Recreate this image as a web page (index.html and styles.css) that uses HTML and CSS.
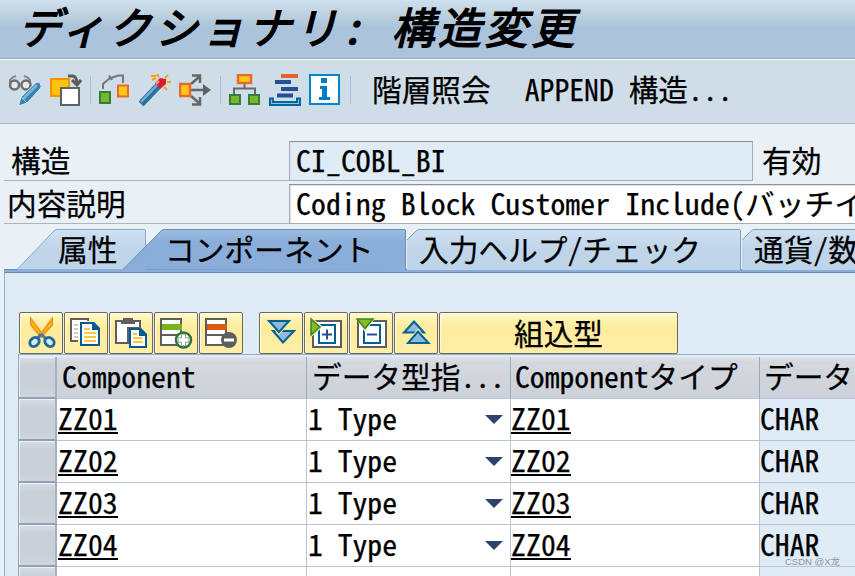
FILE: index.html
```html
<!DOCTYPE html>
<html lang="ja">
<head>
  <meta charset="UTF-8">
  <title>ディクショナリ: 構造変更</title>
  <link rel="stylesheet" href="styles.css">
</head>
<body>

  <header class="titlebar">
    <h1>ディクショナリ: 構造変更</h1>
  </header>

  <nav class="toolbar">
    <!-- display / change -->
    <svg class="icon" viewBox="0 0 32 32">
      <path d="M1 9V6L4 3L7 2M21 9V6L18 3L15 2" fill="none" stroke="#888" stroke-width="2"/>
      <circle cx="5.500" cy="11" r="4.500" fill="#e4ebf0" stroke="#6d6d6d" stroke-width="2.500"/>
      <circle cx="17" cy="11" r="4.500" fill="#e4ebf0" stroke="#6d6d6d" stroke-width="2.500"/>
      <path d="M9.500 32L12 23L27 8.500Q30 7 31.500 10Q33 13 31 15L18 29Z" fill="#3583b5" stroke="#e3edf4" stroke-width="1"/>
      <path d="M14 25L28 11" stroke="#78b5dc" stroke-width="2.500"/>
      <path d="M12 23L18 29" stroke="#b8d5e8" stroke-width="1"/>
    </svg>
    <!-- other object -->
    <svg class="icon icon-copyobj" viewBox="0 0 32 32">
      <rect x="1" y="5" width="18" height="17" fill="#ffc20f" stroke="#f29400" stroke-width="2"/>
      <path d="M18 2H23Q27 3 27 10M22 6L27 11L31 6" fill="none" stroke="#5c5c5c" stroke-width="3"/>
      <rect x="11" y="14" width="18" height="17" fill="#fff" stroke="#616161" stroke-width="2"/>
    </svg>
    <span class="sep"></span>
    <svg class="icon" viewBox="0 0 32 32">
      <path d="M5 15V10L12 4M11 1.500L14 6M13 4L20 1.500H25V9" fill="none" stroke="#777" stroke-width="2"/>
      <rect x="2" y="18" width="10" height="11" fill="#76b82a" stroke="#367c3e" stroke-width="2"/>
      <rect x="20" y="11.500" width="10" height="11" fill="#ffc61a" stroke="#e56b2c" stroke-width="2"/>
    </svg>
    <!-- activate -->
    <svg class="icon icon-wand" viewBox="0 0 32 32">
      <path d="M2 30L20 11" stroke="#28749f" stroke-width="7"/>
      <path d="M2 28L19 10" stroke="#75add2" stroke-width="2.500"/>
      <path d="M16 9L21 4L27 5V10L21 15Z" fill="#dc1c28"/>
      <path d="M17 10L20 7" stroke="#f4a1a4" stroke-width="2"/>
      <path d="M12 2H17M18 0L20 3M29 1L26 4M28 8H32M25 13L28 16M13 6L17 4" stroke="#ffa200" stroke-width="2"/>
    </svg>
    <!-- where-used -->
    <svg class="icon icon-used" viewBox="0 0 32 32">
      <path d="M12 16H26M12 10L20 3M12 22L20 29M13 1.500H21V9M13 30.500H21V23" fill="none" stroke="#666" stroke-width="2.500"/>
      <path d="M24 10L32 16L24 22Z" fill="#606060"/>
      <rect x="1" y="10" width="10" height="12" fill="#ffc61a" stroke="#e56b2c" stroke-width="2.500"/>
    </svg>
    <span class="sep sep-wide"></span>
    <!-- hierarchy -->
    <svg class="icon icon-tree" viewBox="0 0 32 32">
      <path d="M15.500 10V15M5 20V14.500H26V20" fill="none" stroke="#686868" stroke-width="2"/>
      <rect x="9" y="1" width="13" height="8" fill="#ffc61a" stroke="#e56b2c" stroke-width="2.500"/>
      <rect x="1" y="21" width="10" height="9" fill="#76b82a" stroke="#367c3e" stroke-width="2"/>
      <rect x="20" y="21" width="10" height="9" fill="#76b82a" stroke="#367c3e" stroke-width="2"/>
    </svg>
    <svg class="icon icon-stack" viewBox="0 0 32 32">
      <rect x="12" y="0" width="17" height="4" fill="#e0642b"/>
      <rect x="6" y="6" width="16" height="4" fill="#254f96"/>
      <rect x="12" y="13" width="17" height="4" fill="#254f96"/>
      <rect x="8" y="19.500" width="16" height="4" fill="#254f96"/>
      <path d="M1 24.500H4V28H28V24.500H31V31H1Z" fill="#8ec0df" stroke="#00659b" stroke-width="2"/>
    </svg>
    <svg class="icon icon-info" viewBox="0 0 32 32">
      <rect x="1" y="1" width="29" height="29" fill="#fff" stroke="#0085c8" stroke-width="2"/>
      <path d="M12 4H18V9H12ZM11 12H18V23H21V26H10V23H13V15H11Z" fill="#007cc0"/>
    </svg>
    <span class="sep sep-wide"></span>
    <span class="command">階層照会</span>
    <span class="command">APPEND 構造...</span>
  </nav>

  <main>
    <section class="fields">
      <div class="field-row">
        <label class="indent">構造</label>
        <div class="field readonly">CI_COBL_BI</div>
        <span class="status">有効</span>
      </div>
      <div class="field-row">
        <label>内容説明</label>
        <div class="field">Coding Block Customer Include(バッチイ</div>
      </div>
    </section>

    <svg class="defs" width="0" height="0">
      <defs>
        <linearGradient id="tabFill" x1="0" y1="0" x2="0" y2="1">
          <stop offset="0" stop-color="#cfe0f0"/>
          <stop offset=".5" stop-color="#bfd5ea"/>
          <stop offset="1" stop-color="#bdd4e9"/>
        </linearGradient>
        <linearGradient id="activeFill" x1="0" y1="0" x2="0" y2="1">
          <stop offset="0" stop-color="#9dbde1"/>
          <stop offset=".3" stop-color="#8aaed9"/>
          <stop offset="1" stop-color="#8aaed9"/>
        </linearGradient>
      </defs>
    </svg>

    <div class="tabs">
      <div class="tab tab-attr">
        <svg class="tab-shape" viewBox="0 0 130 41"><path d="M0 40.500L36 3Q38 .5 40 .5H127Q128.500 .5 128.500 2V40.500" fill="url(#tabFill)" stroke="#8ba9c6"/></svg>
        <span>属性</span>
      </div>
      <div class="tab tab-comp">
        <svg class="tab-shape" viewBox="0 0 284 41"><path d="M0 40.500L37 3Q39 .5 41 .5H281Q282.500 .5 282.500 2V41" fill="url(#activeFill)" stroke="#668db7"/></svg>
        <span>コンポーネント</span>
      </div>
      <div class="tab tab-help">
        <svg class="tab-shape" viewBox="0 0 335 41"><path d="M-.5 41V11.500L9 2Q10.500 .5 12 .5H332Q333.500 .5 333.500 2V41" fill="url(#tabFill)" stroke="#7e9fc0"/></svg>
        <span>入力ヘルプ/チェック</span>
      </div>
      <div class="tab tab-qty">
        <svg class="tab-shape" viewBox="0 0 260 41"><path d="M-.5 41V11.500L9 2Q10.500 .5 12 .5H260V41" fill="url(#tabFill)" stroke="#7e9fc0"/></svg>
        <span>通貨/数</span>
      </div>
    </div>

    <section class="panel">
      <div class="buttons">
        <button class="btn">
          <svg viewBox="0 0 44 42">
            <path d="M12 7V13L22 25L33 13V7L22.500 21Z" fill="#ffc400" stroke="#f39a1d" stroke-width="2"/>
            <path d="M22 22L19 26M22 22L26 26" stroke="#45789c" stroke-width="3"/>
            <ellipse cx="15.500" cy="30" rx="5" ry="4" transform="rotate(-40 15.500 30)" fill="#d7eaf5" stroke="#226a9b" stroke-width="3"/>
            <ellipse cx="30.500" cy="30" rx="5" ry="4" transform="rotate(40 30.500 30)" fill="#d7eaf5" stroke="#226a9b" stroke-width="3"/>
          </svg>
        </button>
        <button class="btn">
          <svg viewBox="0 0 44 42">
            <path d="M24 9V7H7V29H14" fill="#fff" stroke="#5e5e5e" stroke-width="2"/>
            <path d="M10 13H14M10 17H14M10 21H14M10 25H14" stroke="#bbb" stroke-width="1.500"/>
            <path d="M17 11H29L35 17V33H17Z" fill="#fff" stroke="#005b94" stroke-width="2"/>
            <path d="M28 10H30L36 16V18H28Z" fill="#005b94"/>
            <path d="M20 17H26M20 21H32M20 25H32M20 29H32" stroke="#ffc83d" stroke-width="2"/>
          </svg>
        </button>
        <button class="btn">
          <svg viewBox="0 0 44 42">
            <path d="M31 16V9H7V31H19V16Z" fill="#fff" stroke="#5e5e5e" stroke-width="2"/>
            <path d="M14 6H24V8H26V12H12V8H14Z" fill="#5e5e5e"/>
            <path d="M21 17H31L37 23V35H21Z" fill="#fff" stroke="#005b94" stroke-width="2"/>
            <path d="M30 16H32L38 22V24H30Z" fill="#005b94"/>
            <path d="M24 22H28M24 26H33M24 30H34" stroke="#ffc83d" stroke-width="2"/>
          </svg>
        </button>
        <button class="btn">
          <svg viewBox="0 0 44 42">
            <path d="M27 7H7V33H27Z" fill="#fff" stroke="#5e5e5e" stroke-width="2"/>
            <path d="M7 23H27" stroke="#5e5e5e" stroke-width="2"/>
            <rect x="8" y="12" width="20" height="6" fill="#76b51b"/>
            <circle cx="29.500" cy="28" r="7.500" fill="#fff" stroke="#33713d" stroke-width="2.500"/>
            <path d="M29.500 22.500V33.500M24 28H35" stroke="#67936e" stroke-width="5"/>
            <path d="M29.500 23V33M24.500 28H34.500" stroke="#fff" stroke-width="3.500"/>
          </svg>
        </button>
        <button class="btn">
          <svg viewBox="0 0 44 42">
            <path d="M27 7H7V33H27Z" fill="#fff" stroke="#5e5e5e" stroke-width="2"/>
            <path d="M7 23H27" stroke="#5e5e5e" stroke-width="2"/>
            <rect x="8" y="12" width="20" height="6" fill="#dc5816"/>
            <circle cx="30" cy="28" r="8" fill="#5e5e5e"/>
            <path d="M25 28H35" stroke="#fff" stroke-width="3"/>
          </svg>
        </button>
        <button class="btn gap">
          <svg viewBox="0 0 44 42">
            <path d="M14 19H35L24 30.500Z" fill="#91b8df" stroke="#00628f" stroke-width="2"/>
            <path d="M10 9H30L20 20Z" fill="#91b8df" stroke="#ffeea8" stroke-width="4"/>
            <path d="M10 9H30L20 20Z" fill="#91b8df" stroke="#00628f" stroke-width="2"/>
          </svg>
        </button>
        <button class="btn">
          <svg viewBox="0 0 44 42">
            <rect x="9" y="9" width="28" height="26" fill="#fff" stroke="#5e5e5e" stroke-width="2"/>
            <rect x="15" y="13" width="16" height="18" fill="#fff" stroke="#005f91" stroke-width="2"/>
            <path d="M23 17.500V27.500M18 22.500H28" stroke="#214f98" stroke-width="2"/>
            <path d="M6 4V26L19 15Z" fill="#fff6c8"/>
            <path d="M7 7V23L16 15Z" fill="#82bc27" stroke="#41801f" stroke-width="1.500"/>
          </svg>
        </button>
        <button class="btn">
          <svg viewBox="0 0 44 42">
            <rect x="9" y="9" width="28" height="26" fill="#fff" stroke="#5e5e5e" stroke-width="2"/>
            <rect x="15" y="13" width="16" height="18" fill="#fff" stroke="#005f91" stroke-width="2"/>
            <path d="M18 22.500H28" stroke="#214f98" stroke-width="2"/>
            <path d="M6 5H27L16 20Z" fill="#fff6c8"/>
            <path d="M8 7H24L16 16.500Z" fill="#82bc27" stroke="#41801f" stroke-width="1.500"/>
          </svg>
        </button>
        <button class="btn">
          <svg viewBox="0 0 44 42">
            <path d="M10 20.500H30L20 9.500Z" fill="#91b8df" stroke="#00628f" stroke-width="2"/>
            <path d="M14 31H34.500L24 19.500Z" fill="#91b8df" stroke="#ffeea8" stroke-width="4"/>
            <path d="M14 31H34.500L24 19.500Z" fill="#91b8df" stroke="#00628f" stroke-width="2"/>
          </svg>
        </button>
        <button class="btn btn-text">組込型</button>
      </div>

      <div class="grid">
        <div class="row head">
          <div class="mark"></div>
          <div class="cell">Component</div>
          <div class="cell">データ型指...</div>
          <div class="cell">Componentタイプ</div>
          <div class="cell">データ</div>
        </div>
        <div class="row">
          <div class="mark"></div>
          <div class="cell"><a>ZZ01</a></div>
          <div class="cell select">1 Type</div>
          <div class="cell"><a>ZZ01</a></div>
          <div class="cell dtype">CHAR</div>
        </div>
        <div class="row">
          <div class="mark"></div>
          <div class="cell"><a>ZZ02</a></div>
          <div class="cell select">1 Type</div>
          <div class="cell"><a>ZZ02</a></div>
          <div class="cell dtype">CHAR</div>
        </div>
        <div class="row">
          <div class="mark"></div>
          <div class="cell"><a>ZZ03</a></div>
          <div class="cell select">1 Type</div>
          <div class="cell"><a>ZZ03</a></div>
          <div class="cell dtype">CHAR</div>
        </div>
        <div class="row">
          <div class="mark"></div>
          <div class="cell"><a>ZZ04</a></div>
          <div class="cell select">1 Type</div>
          <div class="cell"><a>ZZ04</a></div>
          <div class="cell dtype">CHAR</div>
        </div>
        <div class="row last">
          <div class="mark"></div>
          <div class="cell"></div>
          <div class="cell"></div>
          <div class="cell"></div>
          <div class="cell dtype"></div>
        </div>
      </div>
    </section>
  </main>

  <div class="watermark">CSDN @X龙</div>

</body>
</html>
```

FILE: styles.css
```css
* {
  box-sizing: border-box;
}
body {
  margin: 0;
  height: 576px;
  overflow: hidden;
  position: relative;
  background: #e9f0f6;
  color: #000;
  font-family: "Noto Sans CJK JP", sans-serif;
  font-size: 29.7px;
  line-height: 38px;
  font-feature-settings: "hwid";
  -webkit-text-stroke: .25px #000;
  white-space: nowrap;
}

/* title */
.titlebar {
  height: 60px;
  padding-left: 18px;
  background: linear-gradient(#cfe0ef 0, #bfd2e0 14px, #abc4db 27px, #acc3db 57px);
  border-bottom: 1px solid #f5f8fb;
  box-shadow: inset 0 -1px #94aec8;
}
h1 {
  margin: 0;
  font-size: 43px;
  letter-spacing: 3.6px;
  line-height: 51px;
  font-style: italic;
  font-weight: normal;
  -webkit-text-stroke: 1.5px #000;
}

/* application toolbar */
.toolbar {
  display: flex;
  align-items: center;
  height: 64px;
  padding: 0 0 3px 9px;
  background: #cfdde8;
  border-bottom: 1px solid #a6b7c6;
}
.icon {
  width: 32px;
  height: 32px;
  flex: none;
}
.icon-copyobj,
.icon-wand {
  margin-left: 9px;
}
.icon-used,
.icon-stack,
.icon-info {
  margin-left: 8px;
}
.sep {
  width: 1px;
  height: 28px;
  margin: 0 7px 0 8px;
  background: #a4c0dc;
}
.sep-wide {
  margin: 0 8px 0 9px;
}
.command {
  margin: -2px 0 0 13px;
}
.command + .command {
  margin-left: 34px;
}

/* header fields */
.fields {
  padding: 17px 0 0 4px;
}
.field-row {
  display: flex;
  height: 40px;
  margin-bottom: 3px;
}
label {
  width: 285px;
  flex: none;
  padding-left: 3px;
  border-bottom: 1px solid #b0b4b8;
}
.indent {
  padding-left: 7px;
}
.field {
  width: 566px;
  flex: none;
  overflow: hidden;
  padding-left: 6px;
  line-height: 36px;
  letter-spacing: .12px;
  background: #fff;
  border: 1px solid #a8adb2;
  border-top-color: #8c9299;
  border-right: 0;
  box-shadow: inset 1px 1px #dde0e4;
}
.readonly {
  width: 464px;
  background: #dfebf5;
  border-right: 1px solid #a8adb2;
}
.status {
  margin-left: 9px;
}

/* tab strip */
.defs {
  display: block;
}
.tabs {
  display: flex;
  height: 43px;
  margin: 2px 0 0 4px;
  padding-left: 13px;
  line-height: 39px;
  border-bottom: 2px solid #8aaed9;
  box-shadow: inset 0 -1px #668db7, 0 1px #668db7;
}
.tab {
  position: relative;
  flex: none;
  height: 41px;
}
.tab-shape {
  position: absolute;
  top: 0;
  left: 0;
  width: 100%;
  height: 41px;
}
.tab span {
  position: relative;
}
.tab-attr {
  width: 130px;
  padding-left: 41px;
}
.tab-comp {
  width: 284px;
  margin-left: -24px;
  padding-left: 42px;
  letter-spacing: .1px;
  z-index: 1;
}
.tab-help {
  width: 335px;
  padding-left: 12px;
}
.tab-qty {
  width: 113px;
  overflow: hidden;
  padding-left: 12px;
}
.tab-qty .tab-shape {
  width: 260px;
}

.panel {
  height: 304px;
  overflow: hidden;
  margin: 0 0 0 4px;
  padding: 40px 0 0 13px;
  background: #dfebf5;
  background-clip: padding-box;
  border-top: 1px solid transparent;
  border-left: 1px solid #8fb0d2;
}

/* table buttons */
.buttons {
  display: flex;
  gap: 1px;
  margin-top: -1px;
  padding-left: 1px;
}
.btn {
  width: 44px;
  height: 42px;
  padding: 0;
  border: 1px solid #6e6b57;
  border-radius: 2px;
  background: linear-gradient(#fffbe0 0, #fff2b0 6px, #ffeb9c 16px, #ffeea8 100%);
  box-shadow: inset 1px 0 #fffbe0;
  font: inherit;
  font-feature-settings: inherit;
  -webkit-text-stroke: inherit;
  color: #000;
}
.btn svg {
  display: block;
  width: 44px;
  height: 42px;
  margin: -1px;
}
.gap {
  margin-left: 15px;
}
.btn-text {
  width: 239px;
}

/* component table */
.grid {
  border-top: 1px solid #8fb0d2;
  border-left: 1px solid #8fa4bb;
}
.row {
  display: grid;
  grid-template-columns: 38px 250px 204px 249px 95px;
  height: 42px;
}
.mark {
  border-right: 2px solid #a3b1c0;
  border-bottom: 2px solid #8fa1b4;
  background: linear-gradient(#d9dee6, #cad0d8 8px, #cad0d8 32px, #d0d5df);
  box-shadow: inset 1px 1px #eef1f4;
}
.cell {
  padding-left: 1px;
  line-height: 37px;
  background: #fff;
  border-right: 1px solid #b9c4d4;
  border-bottom: 1px solid #b9c4d4;
}
.row .cell:nth-child(n+4) {
  padding-left: 0;
}
.cell:last-child {
  border-right: 0;
}
.row .dtype {
  background: #dfebf5;
}
.cell a {
  display: inline-block;
  height: 35px;
  letter-spacing: .1px;
  border-bottom: 2px solid #000;
}
.select {
  display: flex;
  justify-content: space-between;
  padding-right: 7px;
}
.select::after {
  content: "";
  align-self: center;
  border: 9px solid transparent;
  border-top: 9px solid #2c426f;
  border-bottom: 0;
}
.head {
  height: 44px;
  padding-top: 2px;
}
.head .cell {
  padding-left: 5px;
  line-height: 38px;
  background: linear-gradient(#e0e4e9 0, #d3d9df 5px, #d1d6dc 16px, #cdd2da 100%);
  border-right-color: #9ca9b7;
}
.row.head .cell:nth-child(n+4) {
  padding-left: 4px;
}
.last {
  height: 10px;
}
.last .mark,
.last .cell {
  border-bottom: 0;
}

.watermark {
  position: absolute;
  right: 15px;
  bottom: 8px;
  font: 9.5px/12px "Liberation Sans", "Noto Sans CJK SC", sans-serif;
  -webkit-text-stroke: 0;
  color: #8c949b;
}
```
